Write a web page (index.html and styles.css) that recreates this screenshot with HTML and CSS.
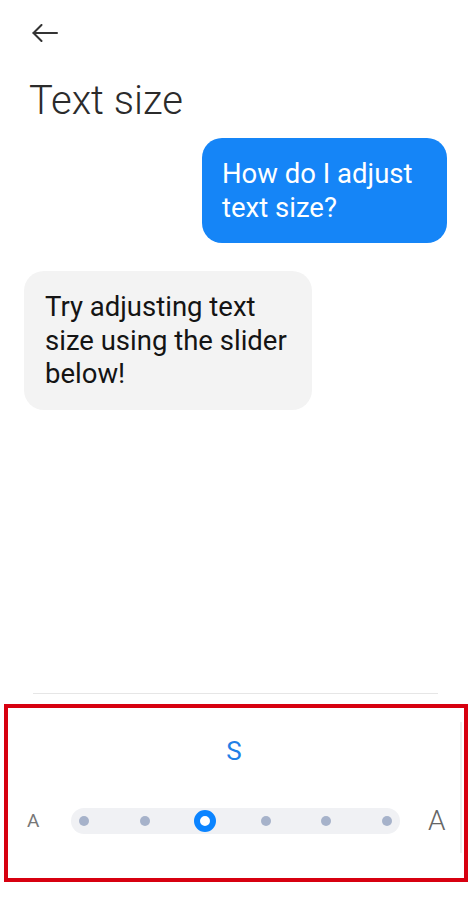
FILE: index.html
```html
<!DOCTYPE html>
<html lang="en">
<head>
<meta charset="utf-8">
<title>Text size</title>
<link rel="stylesheet" href="styles.css">
</head>
<body>
<div class="screen">
  <header class="header">
    <button class="back" aria-label="Back">
      <svg width="26" height="18" viewBox="0 0 26 18" fill="none" stroke="#333" stroke-width="2" stroke-linecap="round" stroke-linejoin="round">
        <path d="M1.5 9 H25"/>
        <path d="M9.5 1 L1.5 9 L9.5 17"/>
      </svg>
    </button>
    <h1 class="title">Text size</h1>
  </header>

  <main class="chat">
    <div class="bubble bubble-out">How do I adjust text size?</div>
    <div class="bubble bubble-in">Try adjusting text size using the slider below!</div>
  </main>

  <div class="divider"></div>

  <section class="panel">
    <div class="size-label">S</div>
    <div class="slider-row">
      <span class="a-small">A</span>
      <div class="track">
        <span class="stop"><span class="dot"></span></span>
        <span class="stop"><span class="dot"></span></span>
        <span class="stop"><span class="dot dot-active"></span></span>
        <span class="stop"><span class="dot"></span></span>
        <span class="stop"><span class="dot"></span></span>
        <span class="stop"><span class="dot"></span></span>
      </div>
      <span class="a-large">A</span>
    </div>
    <div class="scroll-indicator"></div>
  </section>
</div>
</body>
</html>
```

FILE: styles.css
```css
* { box-sizing: border-box; }

html, body {
  margin: 0;
  padding: 0;
  background: #ffffff;
}

body {
  font-family: Roboto, "Noto Sans", "Liberation Sans", sans-serif;
  color: #111;
}

.screen {
  width: 474px;
  height: 922px;
  display: flex;
  flex-direction: column;
}

.header {
  padding: 24px 0 0 0;
}

.back {
  display: block;
  margin-left: 32px;
  padding: 0;
  border: 0;
  background: transparent;
  width: 26px;
  height: 18px;
}

.back svg { display: block; }

.title {
  margin: 35px 0 0 29px;
  font-size: 40px;
  font-weight: 300;
  line-height: 48px;
  color: #2b2b2b;
}

.chat {
  flex: 1;
  display: flex;
  flex-direction: column;
  align-items: flex-start;
  gap: 28px;
  padding-top: 13px;
}

.bubble {
  font-size: 27.5px;
  line-height: 33.5px;
  padding: 19px 18px 19px 21px;
  border-radius: 20px;
}

.bubble-out {
  align-self: flex-end;
  margin-right: 27px;
  width: 245px;
  background: #1585f7;
  color: #ffffff;
  padding-left: 20px;
}

.bubble-in {
  margin-left: 24px;
  width: 288px;
  background: #f3f3f3;
  color: #141414;
}

.divider {
  height: 1px;
  margin: 0 36px 10px 33px;
  background: #e6e6e6;
}

.panel {
  position: relative;
  height: 178px;
  margin: 0 6px 40px 4px;
  border: 4px solid #d70010;
  display: flex;
  flex-direction: column;
  align-items: stretch;
}

.size-label {
  margin-top: 28px;
  text-align: center;
  font-size: 26px;
  line-height: 30px;
  color: #1f80e6;
  padding-right: 4px;
}

.slider-row {
  margin-top: 39px;
  display: flex;
  align-items: center;
  padding-left: 19px;
}

.a-small {
  font-size: 19px;
  line-height: 22px;
  color: #777;
  width: 13px;
}

.track {
  margin-left: 31px;
  width: 329px;
  height: 26px;
  border-radius: 13px;
  background: #f0f1f4;
  display: flex;
  align-items: center;
  justify-content: space-between;
  padding: 0 2px;
}

.stop {
  width: 22px;
  height: 22px;
  display: flex;
  align-items: center;
  justify-content: center;
}

.dot {
  width: 10px;
  height: 10px;
  border-radius: 50%;
  background: #a6b2ca;
}

.dot-active {
  width: 22px;
  height: 22px;
  background: #ffffff;
  border: 6px solid #0b84ff;
}

.a-large {
  margin-left: 28px;
  font-size: 28px;
  font-weight: 300;
  line-height: 32px;
  color: #666;
}

.scroll-indicator {
  position: absolute;
  right: 2px;
  top: 14px;
  width: 2px;
  height: 131px;
  background: #eeeeee;
}
```
